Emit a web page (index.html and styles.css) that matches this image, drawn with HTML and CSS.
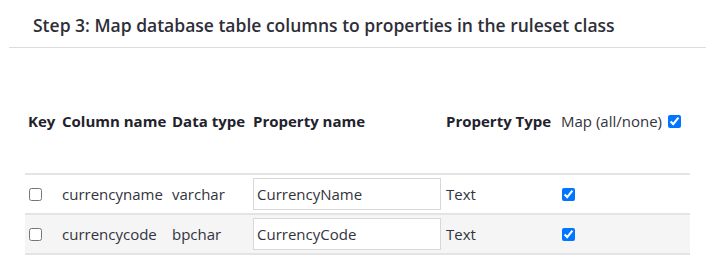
FILE: index.html
```html
<!DOCTYPE html>
<html lang="en">
<head>
  <meta charset="UTF-8" />
  <meta name="viewport" content="width=device-width, initial-scale=1.0"/>
  <title>Map columns</title>
  <link rel="stylesheet" href="styles.css">
</head>
<body>
  <div class="step-header">
    <h2>Step 3: Map database table columns to properties in the ruleset class</h2>
  </div>

  <table class="mapping">
    <colgroup>
      <col class="col-key">
      <col class="col-name">
      <col class="col-type">
      <col class="col-prop">
      <col class="col-ptype">
      <col class="col-map">
    </colgroup>
    <thead>
      <tr>
        <th>Key</th>
        <th>Column name</th>
        <th>Data type</th>
        <th>Property name</th>
        <th>Property Type</th>
        <th class="map-head">Map (all/none) <input type="checkbox" checked></th>
      </tr>
    </thead>
    <tbody>
      <tr>
        <td><input type="checkbox"></td>
        <td>currencyname</td>
        <td>varchar</td>
        <td><input type="text" class="prop-input" value="CurrencyName"></td>
        <td>Text</td>
        <td><input type="checkbox" class="map-check" checked></td>
      </tr>
      <tr class="alt">
        <td><input type="checkbox"></td>
        <td>currencycode</td>
        <td>bpchar</td>
        <td><input type="text" class="prop-input" value="CurrencyCode"></td>
        <td>Text</td>
        <td><input type="checkbox" class="map-check" checked></td>
      </tr>
    </tbody>
  </table>
</body>
</html>
```

FILE: styles.css
```css
body {
  margin: 0;
  font-family: 'Open Sans', 'Noto Sans', sans-serif;
  font-size: 15px;
  color: #33333d;
  background: #fff;
}

.step-header {
  margin: 0 4px 0 9px;
  padding: 13px 0 10px 24px;
  border-bottom: 1px solid #dcdcdc;
}

.step-header h2 {
  margin: 0;
  font-size: 17.5px;
  font-weight: 600;
  line-height: 24px;
  color: #2e2e38;
}

.mapping {
  margin: 63px 0 0 25px;
  width: 665px;
  border-collapse: collapse;
  table-layout: fixed;
}

.col-key { width: 34px; }
.col-name { width: 110px; }
.col-type { width: 81px; }
.col-prop { width: 193px; }
.col-ptype { width: 115px; }
.col-map { width: 132px; }

.mapping th {
  text-align: left;
  font-weight: 700;
  padding: 0 3px 42px;
  height: 20px;
  line-height: 20px;
  vertical-align: bottom;
  white-space: nowrap;
  color: #22222c;
}

.mapping th.map-head {
  font-weight: 400;
  color: #33333d;
}

.map-head input {
  margin: 0 0 0 2px;
  vertical-align: -1px;
}

.mapping td {
  height: 38px;
  padding: 0 3px;
  border-top: 2px solid #e4e4e4;
  vertical-align: middle;
  white-space: nowrap;
}

.mapping tbody tr:last-child td {
  border-bottom: 2px solid #e4e4e4;
}

.mapping tr.alt td {
  background: #f5f5f5;
}

.mapping td input[type="checkbox"] {
  margin: 0 0 0 1px;
  vertical-align: -1px;
}

.mapping td .map-check {
  margin-left: -1px;
}

.prop-input {
  box-sizing: border-box;
  width: 188px;
  height: 32px;
  padding: 0 3px;
  border: 1px solid #d8d8d8;
  border-radius: 0;
  font-family: inherit;
  font-size: 15px;
  color: #33333d;
  background: #fff;
}
```
